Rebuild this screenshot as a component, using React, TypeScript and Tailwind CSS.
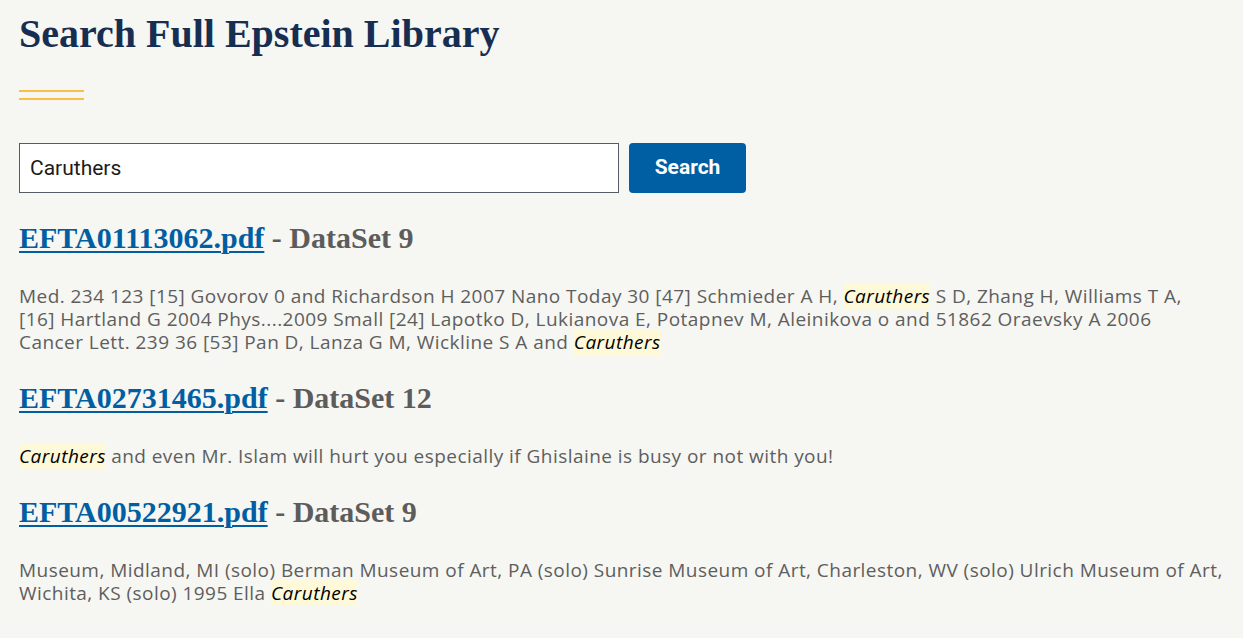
import React from "react";

function Hl({ children }: { children: React.ReactNode }) {
  return <mark className="bg-[#fef9d8] text-black italic">{children}</mark>;
}

function Result({ file, set, children }: { file: string; set: string; children: React.ReactNode }) {
  return (
    <div className="mb-[26px]">
      <h2 className="text-[30px] leading-[36px] font-bold text-[#5c5c5c] [font-family:'Liberation_Serif',serif]">
        <a href="#" className="text-[#005ea2] underline decoration-[2px] underline-offset-[3px]">{file}</a> - {set}
      </h2>
      <p className="mt-[29px] text-[19px] leading-[23px] tracking-[0.45px] text-[#5e5e5e] [font-family:'Open_Sans',sans-serif]">{children}</p>
    </div>
  );
}

export default function App() {
  return (
    <div className="min-h-screen w-full bg-[#f6f6f2] pl-[19px] pr-[18px] pt-[12px]">
      <h1 className="text-[40px] leading-[44px] font-bold text-[#162e51] [font-family:'Liberation_Serif',serif]">Search Full Epstein Library</h1>
      <div className="mt-[34px] flex w-[65px] flex-col gap-[6px]">
        <div className="h-[2px] bg-[#fbbf45]" />
        <div className="h-[2px] bg-[#fbbf45]" />
      </div>
      <div className="mt-[43px] flex gap-[10px]">
        <input
          defaultValue="Caruthers"
          className="h-[50px] w-[600px] border border-[#565c65] bg-white px-[10px] text-[21px] text-[#1b1b1b] outline-none [font-family:Roboto,sans-serif]"
        />
        <button className="h-[50px] w-[117px] rounded-[4px] bg-[#005ea2] text-[21px] font-bold text-white [font-family:Roboto,sans-serif]">
          Search
        </button>
      </div>
      <div className="mt-[27px]">
        <Result file="EFTA01113062.pdf" set="DataSet 9">
          Med. 234 123 [15] Govorov 0 and Richardson H 2007 Nano Today 30 [47] Schmieder A H, <Hl>Caruthers</Hl> S D, Zhang H, Williams T A,
          <br />
          [16] Hartland G 2004 Phys....2009 Small [24] Lapotko D, Lukianova E, Potapnev M, Aleinikova o and 51862 Oraevsky A 2006
          <br />
          Cancer Lett. 239 36 [53] Pan D, Lanza G M, Wickline S A and <Hl>Caruthers</Hl>
        </Result>
        <Result file="EFTA02731465.pdf" set="DataSet 12">
          <Hl>Caruthers</Hl> and even Mr. Islam will hurt you especially if Ghislaine is busy or not with you!
        </Result>
        <Result file="EFTA00522921.pdf" set="DataSet 9">
          Museum, Midland, MI (solo) Berman Museum of Art, PA (solo) Sunrise Museum of Art, Charleston, WV (solo) Ulrich Museum of Art,
          <br />
          Wichita, KS (solo) 1995 Ella <Hl>Caruthers</Hl>
        </Result>
      </div>
    </div>
  );
}
